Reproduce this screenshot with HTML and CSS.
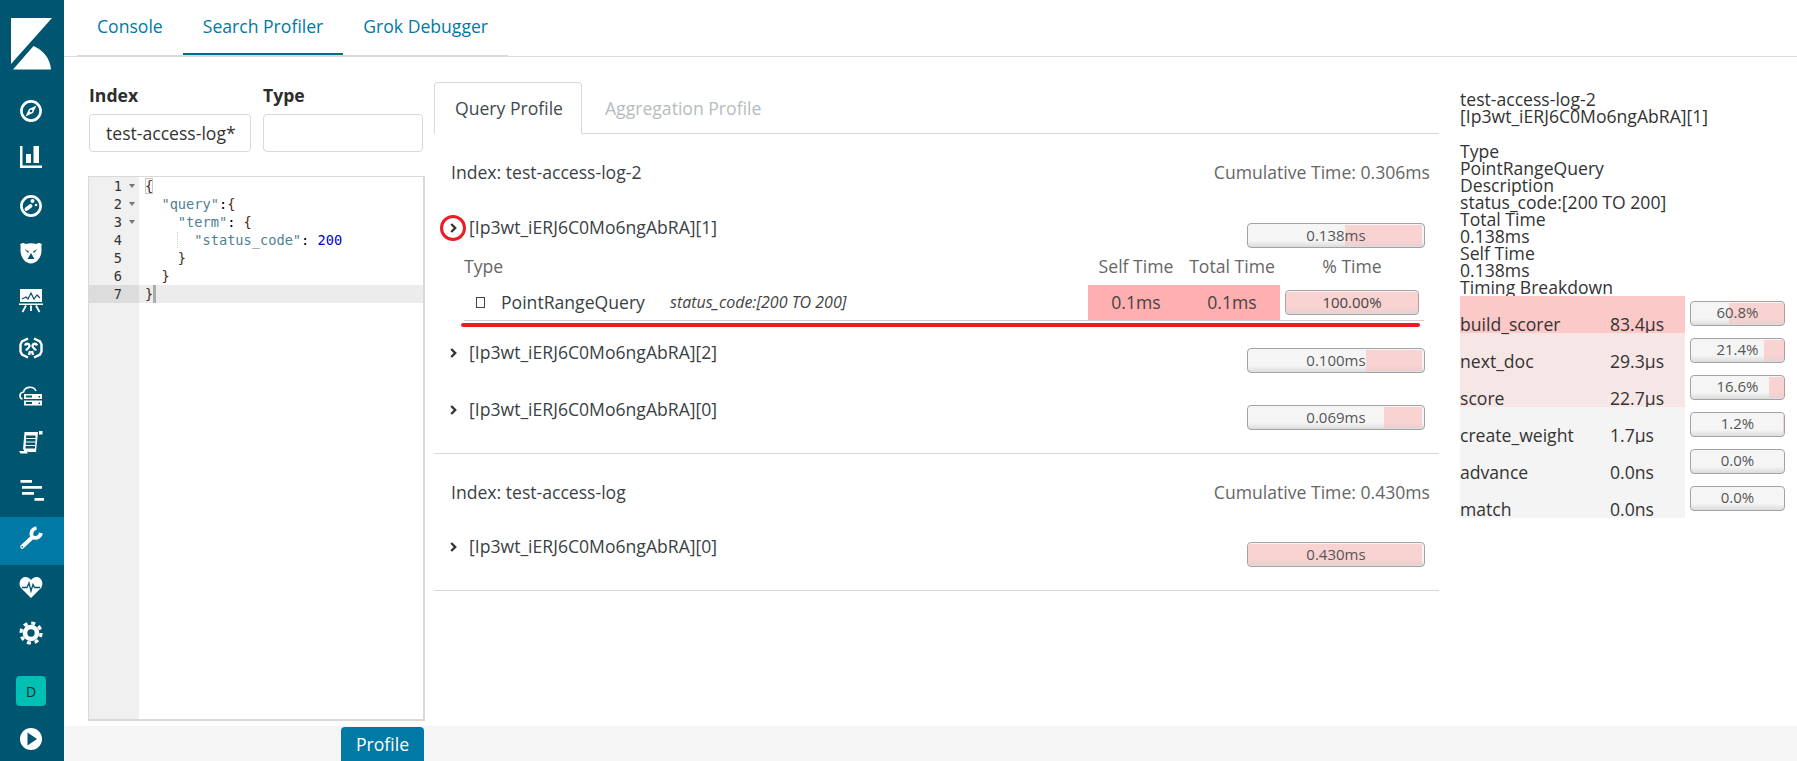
FILE: index.html
```html
<!DOCTYPE html>
<html lang="en">
<head>
<meta charset="utf-8">
<title>Search Profiler</title>
<link rel="stylesheet" href="styles.css">
</head>
<body>
<div class="app">
  <nav class="sidebar">
    <div class="logo">
      <svg width="64" height="85" viewBox="0 0 64 85"><path fill="#fff" d="M11 18H52L11 64Z"/><path fill="#fff" d="M13 69.500L33.500 46C43 50 50 58 51 69.500Z"/></svg>
    </div>
    <a class="nav-item"><svg viewBox="1 -2 24 24"><circle cx="12" cy="12" r="9.600" fill="none" stroke="#fff" stroke-width="2.600"/><path fill="#fff" d="M17.500 6.500L14 14L6.500 17.500L10 10Z"/><circle cx="12" cy="12" r="1.300" fill="#005571"/></svg></a>
    <a class="nav-item"><svg viewBox="1 0 24 24"><path fill="#fff" d="M1 1H3.500V20.500H23V23H1Z"/><path fill="#fff" d="M7 9H12V18H7ZM14.500 1H20V18H14.500Z"/></svg></a>
    <a class="nav-item"><svg viewBox="1 -1 24 24"><circle cx="12" cy="12" r="9.600" fill="none" stroke="#fff" stroke-width="2.600"/><circle cx="13.500" cy="7" r="2" fill="#fff"/><circle cx="17" cy="11" r="1.300" fill="#fff"/><path stroke="#fff" stroke-width="3.800" stroke-linecap="round" d="M7.500 15L11.500 12"/></svg></a>
    <a class="nav-item"><svg viewBox="1 0 24 24"><path fill="#fff" d="M1 3.500C3 1.500 5 1.500 6.500 3Q12 1.500 17.500 3C19 1.500 21 1.500 23 3.500C22 5 22.500 6 22.500 8C23 15 19 22 12 22.500C5 22 1 15 1.500 8C1.500 6 2 5 1 3.500Z"/><path fill="#005571" d="M5.500 8L10 10.500L9 12ZM18.500 8L14 10.500L15 12ZM12 12L15.500 18H8.500Z"/></svg></a>
    <a class="nav-item"><svg viewBox="1 0 24 24"><path fill="#fff" d="M1 0H23V13H1Z"/><path fill="none" stroke="#005571" stroke-width="1.200" d="M3 10L7 8L9 10L12 4L15 10L18 6L21 9"/><path fill="#fff" d="M0 14.500H24V16H0Z"/><path fill="none" stroke="#fff" stroke-width="1.800" d="M7 16.500L3.500 23M12 16.500V22M17 16.500L20.500 23"/></svg></a>
    <a class="nav-item"><svg viewBox="1 1 24 24"><g fill="none" stroke="#fff" stroke-width="2.400"><path d="M9 2.500L3 5.500L1.500 8.500V15.500L3 18.500L9 21.500"/><path d="M15 2.500L21 5.500L22.500 8.500V15.500L21 18.500L15 21.500"/><path d="M6 9.500C7 7 10 7.500 10.500 9.500C11 12 8 12.500 7 14.500"/><path d="M18 9.500C17 7 14 7.500 13.500 9.500C13 12 16 12.500 17 14.500"/><path d="M11 15L10 19M13 15L14 19"/></g></svg></a>
    <a class="nav-item"><svg viewBox="1 1 24 24"><path fill="none" stroke="#fff" stroke-width="1.600" d="M3.500 15C0 14 0 8.500 4.500 8C5.500 3 14 1 17 7"/><path fill="#fff" d="M5 10H23V15H5ZM5 16.500H23V21.500H5Z"/><path fill="#005571" d="M7 11.500H13V13.500H7ZM7 18H13V20H7ZM19.500 12H21V13.500H19.500ZM19.500 18.500H21V20H19.500Z"/></svg></a>
    <a class="nav-item"><svg viewBox="1 2 24 24"><path fill="#fff" d="M5.500 1H19L17 21H9V20H5V18.500H4Z"/><path fill="#fff" d="M0 20H8.500V22.500H1.500ZM20 0H23.500V3.500H20Z"/><path fill="#005571" d="M7 4.500H16.500V7H7ZM7 8H16.500V10.500H7ZM6.800 11.500H16.300V14H6.800ZM6.500 15H16V17.500H6.500Z"/></svg></a>
    <a class="nav-item"><svg viewBox="1 2 24 24"><path fill="#fff" d="M1.500 1H13V3.800H1.500ZM3 7H23V9.800H3ZM3 13H15V15.800H3ZM15.500 19H25V21.800H15.500Z"/></svg></a>
    <a class="nav-item active"><svg viewBox="1 3 24 24"><path fill="none" stroke="#fff" stroke-width="4" stroke-linecap="round" d="M3.200 20.800L12 12.500"/><path fill="none" stroke="#fff" stroke-width="3.800" d="M17.500 2C12.500 3 11.500 7.500 13 11C16.500 13 21 11.500 22 7"/><circle cx="3.200" cy="20.800" r="0.900" fill="#0079a5"/></svg></a>
    <a class="nav-item"><svg viewBox="1 2 24 24"><path fill="#fff" d="M12 23L2 13C-1 9 1 2 6.500 2C9 2 11 3.500 12 5C13 3.500 15 2 17.500 2C23 2 25 9 22 13Z"/><path fill="none" stroke="#005571" stroke-width="1.300" d="M3 12.500H8L10 8L12 16L14 9.500L15.500 12.500H21"/></svg></a>
    <a class="nav-item"><svg viewBox="1 4 24 24"><circle cx="12" cy="12" r="6" fill="none" stroke="#fff" stroke-width="4.600"/><circle cx="12" cy="12" r="10" fill="none" stroke="#fff" stroke-width="3.200" stroke-dasharray="4 3.850"/></svg></a>
    <a class="nav-item first-bottom"><span class="avatar">D</span></a>
    <a class="nav-item"><svg viewBox="1 0 24 24"><circle cx="12" cy="12" r="11" fill="#fff"/><path fill="#005571" d="M8.500 5.500L18 12L8.500 18.500Z"/></svg></a>
  </nav>

  <div class="main">
    <header class="top-bar">
      <div class="top-tabs">
        <a class="top-tab">Console</a>
        <a class="top-tab selected">Search Profiler</a>
        <a class="top-tab">Grok Debugger</a>
      </div>
    </header>

    <div class="content">
      <section class="query-col">
        <div class="fields">
          <label class="field field-index"><span class="field-label">Index</span><span class="text-input">test-access-log*</span></label>
          <label class="field field-type"><span class="field-label">Type</span><span class="text-input"></span></label>
        </div>
        <div class="editor">
          <div class="gutter">
            <div class="gutter-row">1<span class="fold open"></span></div>
            <div class="gutter-row">2<span class="fold open"></span></div>
            <div class="gutter-row">3<span class="fold open"></span></div>
            <div class="gutter-row">4<span class="fold"></span></div>
            <div class="gutter-row">5<span class="fold"></span></div>
            <div class="gutter-row">6<span class="fold"></span></div>
            <div class="gutter-row current">7<span class="fold"></span></div>
          </div>
          <div class="code">
            <div class="code-line"><span class="brace matched">{</span></div>
            <div class="code-line">  <span class="key">"query"</span>:<span class="brace">{</span></div>
            <div class="code-line">    <span class="key">"term"</span>: <span class="brace">{</span></div>
            <div class="code-line">    <span class="guide">  </span><span class="key">"status_code"</span>: <span class="num">200</span></div>
            <div class="code-line">    <span class="brace">}</span></div>
            <div class="code-line">  <span class="brace">}</span></div>
            <div class="code-line current"><span class="brace">}</span><span class="cursor"></span></div>
          </div>
        </div>
      </section>

      <section class="results-col">
        <div class="result-tabs">
          <a class="result-tab selected">Query Profile</a>
          <a class="result-tab">Aggregation Profile</a>
        </div>

        <div class="index-section">
          <div class="index-head"><span>Index: test-access-log-2</span><span class="cumulative">Cumulative Time: 0.306ms</span></div>

          <div class="shard shard-open">
            <div class="shard-head">
              <span class="annotation-circle"></span>
              <svg class="chevron" viewBox="0 0 7 10"><path fill="none" stroke="#333" stroke-width="2.400" d="M1.200 1L5.200 5L1.200 9"/></svg>
              <span class="shard-name">[Ip3wt_iERJ6C0Mo6ngAbRA][1]</span>
              <div class="bar shard-bar"><span class="bar-fill" style="width:43.7%"></span><span class="bar-text">0.138ms</span></div>
            </div>
            <div class="detail-head">
              <span class="col-type">Type</span><span class="col-time">Self Time</span><span class="col-time">Total Time</span><span class="col-pct">% Time</span>
            </div>
            <div class="detail-row">
              <span class="col-type detail-type"><span class="tofu"></span><span class="query-name">PointRangeQuery</span><em class="query-desc">status_code:[200 TO 200]</em></span>
              <span class="col-time hot">0.1ms</span><span class="col-time hot">0.1ms</span>
              <span class="col-pct"><span class="bar pct-bar"><span class="bar-fill" style="width:100%"></span><span class="bar-text">100.00%</span></span></span>
            </div>
            <span class="annotation-line"></span>
          </div>

          <div class="shard">
            <div class="shard-head">
              <svg class="chevron" viewBox="0 0 7 10"><path fill="none" stroke="#333" stroke-width="2.400" d="M1.200 1L5.200 5L1.200 9"/></svg>
              <span class="shard-name">[Ip3wt_iERJ6C0Mo6ngAbRA][2]</span>
              <div class="bar shard-bar"><span class="bar-fill" style="width:32%"></span><span class="bar-text">0.100ms</span></div>
            </div>
          </div>
          <div class="shard">
            <div class="shard-head">
              <svg class="chevron" viewBox="0 0 7 10"><path fill="none" stroke="#333" stroke-width="2.400" d="M1.200 1L5.200 5L1.200 9"/></svg>
              <span class="shard-name">[Ip3wt_iERJ6C0Mo6ngAbRA][0]</span>
              <div class="bar shard-bar"><span class="bar-fill" style="width:21.600%"></span><span class="bar-text">0.069ms</span></div>
            </div>
          </div>
        </div>

        <div class="index-section">
          <div class="index-head"><span>Index: test-access-log</span><span class="cumulative">Cumulative Time: 0.430ms</span></div>
          <div class="shard">
            <div class="shard-head">
              <svg class="chevron" viewBox="0 0 7 10"><path fill="none" stroke="#333" stroke-width="2.400" d="M1.200 1L5.200 5L1.200 9"/></svg>
              <span class="shard-name">[Ip3wt_iERJ6C0Mo6ngAbRA][0]</span>
              <div class="bar shard-bar"><span class="bar-fill" style="width:100%"></span><span class="bar-text">0.430ms</span></div>
            </div>
          </div>
        </div>
      </section>

      <aside class="detail-col">
        <div class="detail-title">test-access-log-2<br>[Ip3wt_iERJ6C0Mo6ngAbRA][1]</div>
        <div class="detail-list">Type<br>PointRangeQuery<br>Description<br>status_code:[200 TO 200]<br>Total Time<br>0.138ms<br>Self Time<br>0.138ms<br>Timing Breakdown</div>
        <div class="breakdown">
          <div class="bd-row"><div class="bd-cells tone-high"><span class="bd-name">build_scorer</span><span>83.4µs</span></div><div class="bar bd-bar"><span class="bar-fill" style="width:59%"></span><span class="bar-text">60.8%</span></div></div>
          <div class="bd-row"><div class="bd-cells tone-mid"><span class="bd-name">next_doc</span><span>29.3µs</span></div><div class="bar bd-bar"><span class="bar-fill" style="width:21.400%"></span><span class="bar-text">21.4%</span></div></div>
          <div class="bd-row"><div class="bd-cells tone-mid"><span class="bd-name">score</span><span>22.7µs</span></div><div class="bar bd-bar"><span class="bar-fill" style="width:16.600%"></span><span class="bar-text">16.6%</span></div></div>
          <div class="bd-row"><div class="bd-cells tone-low"><span class="bd-name">create_weight</span><span>1.7µs</span></div><div class="bar bd-bar"><span class="bar-fill" style="width:1.200%"></span><span class="bar-text">1.2%</span></div></div>
          <div class="bd-row"><div class="bd-cells tone-low"><span class="bd-name">advance</span><span>0.0ns</span></div><div class="bar bd-bar"><span class="bar-text">0.0%</span></div></div>
          <div class="bd-row"><div class="bd-cells tone-low"><span class="bd-name">match</span><span>0.0ns</span></div><div class="bar bd-bar"><span class="bar-text">0.0%</span></div></div>
        </div>
      </aside>
    </div>

    <footer class="action-bar"><button class="profile-btn">Profile</button></footer>
  </div>
</div>
</body>
</html>
```

FILE: styles.css
```css
* { box-sizing: border-box; }
html, body { margin: 0; height: 100%; overflow: hidden; }
body { font-family: "Open Sans", "Liberation Sans", sans-serif; font-size: 17.600px; color: #3a3f45; background: #fff; }

.app { display: flex; height: 761px; overflow: hidden; }

/* Sidebar */
.sidebar { width: 64px; flex: none; background: #005571; display: flex; flex-direction: column; height: 761px; overflow: hidden; }
.logo { height: 85px; flex: none; }
.logo svg { display: block; }
.nav-item { height: 48px; flex: none; display: flex; align-items: center; justify-content: center; }
.nav-item svg { width: 24px; height: 24px; display: block; overflow: visible; }
.nav-item.active { background: #0079a5; }
.first-bottom { margin-top: 6px; }
.avatar { width: 30px; height: 30px; margin-left: -2px; background: #00bfb3; border-radius: 4px; display: flex; align-items: center; justify-content: center; font-size: 14px; color: #0a2530; }

/* Main */
.main { flex: 1; min-width: 0; display: flex; flex-direction: column; }
.top-bar { height: 57px; flex: none; border-bottom: 1px solid #dcdcdc; }
.top-tabs { display: inline-flex; height: 57px; margin-left: 13px; border-bottom: 2px solid #d9d9d9; }
.top-tab { height: 55px; padding: 0 20px 3px; display: flex; align-items: center; color: #0079a5; white-space: nowrap; }
.top-tab.selected { border-bottom: 2px solid #006e8a; padding-bottom: 1px; }

.content { flex: 1; min-height: 0; display: flex; }

/* Query column */
.query-col { width: 337px; margin-left: 24px; flex: none; display: flex; flex-direction: column; padding: 26px 0 5px; }
.fields { display: flex; gap: 12px; margin-left: 1px; width: 334px; flex: none; }
.field { display: flex; flex-direction: column; }
.field-index { width: 162px; }
.field-type { width: 160px; }
.field-label { font-weight: 700; line-height: 24px; margin-bottom: 7px; color: #2d2d2d; }
.text-input { height: 38px; border: 1px solid #d9d9d9; border-radius: 4px; padding-left: 16px; line-height: 36px; color: #333; white-space: nowrap; }

.editor { margin-top: 24px; flex: 1; min-height: 0; border: 1px solid #d9d9d9; border-width: 1px 2px 2px 1px; display: flex; background: #fff; font-family: "DejaVu Sans Mono", monospace; font-size: 13.650px; line-height: 18px; }
.gutter { width: 50px; flex: none; background: #f0f0f0; color: #333; }
.gutter-row { height: 18px; display: flex; justify-content: flex-end; padding-right: 4px; }
.gutter-row.current { background: #dcdcdc; }
.fold { width: 13px; position: relative; }
.fold.open::after { content: ""; position: absolute; right: 0; top: 7px; border-style: solid; border-width: 4px 3.500px 0; border-color: #777 transparent transparent; }
.code { flex: 1; min-width: 0; color: #000; }
.code-line { height: 18px; padding-left: 6px; white-space: pre; }
.code-line.current { background: #ececec; }
.key { color: #4f7f93; }
.brace { color: #4a2a1a; }
.num { color: #0000cd; }
.matched { outline: 1px solid #c8c8c8; outline-offset: -1px; }
.guide { border-left: 1px dotted #ccc; margin-left: -1px; }
.cursor { display: inline-block; width: 3px; height: 18px; background: #aaa; vertical-align: top; }

/* Results */
.results-col { width: 1005px; margin-left: 9px; flex: none; padding-top: 25px; }
.result-tabs { display: flex; height: 52px; border-bottom: 1px solid #d9d9d9; }
.result-tab { padding: 0 20px 1px; height: 52px; display: flex; align-items: center; color: #b4bcc2; white-space: nowrap; margin-right: 3px; }
.result-tab.selected { color: #3f4a52; border: 1px solid #d9d9d9; border-bottom: 1px solid #fff; border-radius: 4px 4px 0 0; width: 148px; padding-left: 20px; }

.index-section { border-bottom: 1px solid #d9d9d9; }
.index-head { display: flex; justify-content: space-between; padding: 26px 9px 31px 17px; line-height: 24px; }
.index-section + .index-section .index-head { padding-bottom: 30px; }
.cumulative { color: #666; }

.shard { position: relative; }
.shard-head { position: relative; display: flex; align-items: flex-start; height: 57px; padding-left: 16px; line-height: 24px; }
.index-section .shard:last-child .shard-head { height: 56px; }
.shard-open .shard-head { height: 38px; }
.chevron { width: 7px; height: 10px; margin-top: 8px; flex: none; }
.shard-name { margin-left: 12px; color: #3a3f45; white-space: nowrap; }

.bar { position: relative; display: block; height: 25px; border: 1px solid #a3a3a3; border-radius: 4px; background: linear-gradient(#f5f5f5 72%, #dcdcdc 100%); text-align: center; font-size: 15px; line-height: 23px; color: #555; overflow: hidden; }
.bar-fill { position: absolute; top: 1px; bottom: 1px; right: 0; background: linear-gradient(#f9d2d2 72%, #ebd0d0 100%); }
.bar-text { position: relative; }
.shard-bar { position: absolute; left: 813px; top: 8px; width: 178px; }
.shard-bar .bar-fill { right: 2px; }
.pct-bar { width: 134px; margin: 0 auto; color: #444; }

.detail-head, .detail-row { display: flex; margin-left: 30px; width: 960px; }
.detail-head { height: 32px; line-height: 26px; color: #666; }
.col-type { width: 624px; flex: none; }
.col-time { width: 96px; flex: none; text-align: center; white-space: nowrap; }
.col-pct { width: 144px; flex: none; text-align: center; }
.detail-row { height: 36px; line-height: 35px; border-bottom: 1px solid #d0d0d0; margin-bottom: 19px; }
.detail-type { display: flex; align-items: center; padding-left: 12px; }
.tofu { width: 9px; height: 11px; border: 1px solid #444; flex: none; }
.query-name { margin-left: 16px; width: 169px; flex: none; white-space: nowrap; }
.query-desc { font-size: 16px; color: #444; white-space: nowrap; }
.hot { background: #ffafaf; height: 35px; color: #444; }
.detail-row .col-pct { padding-top: 5px; }
.annotation-circle { position: absolute; left: 6px; top: 0; width: 26px; height: 26px; border: 3px solid #ed1c24; border-radius: 50%; }
.annotation-line { position: absolute; left: 27px; top: 108px; width: 959px; height: 4px; background: #ed1c24; border-radius: 2px; }

/* Detail column */
.detail-col { width: 325px; margin-left: 21px; flex: none; padding-top: 34px; line-height: 17px; color: #333; }
.detail-list { margin-top: 18px; }
.bd-row { display: flex; height: 37px; }
.bd-cells { width: 225px; flex: none; display: flex; align-items: flex-end; line-height: 18px; white-space: nowrap; }
.bd-name { width: 150px; flex: none; position: relative; z-index: 1; }
.tone-high { background: #fcc9c9; }
.tone-mid { background: #f7e6e6; }
.tone-low { background: #f4f4f4; }
.bd-bar { width: 95px; margin: 5px 0 0 5px; line-height: 21px; }

/* Footer */
.action-bar { height: 35px; flex: none; background: #f5f5f5; position: relative; }
.profile-btn { display: block; margin: 1px 0 0 277px; width: 83px; height: 40px; background: #0079a5; color: #fff; border: 0; border-radius: 4px 4px 0 0; font: inherit; padding: 0 0 6px; }
```
